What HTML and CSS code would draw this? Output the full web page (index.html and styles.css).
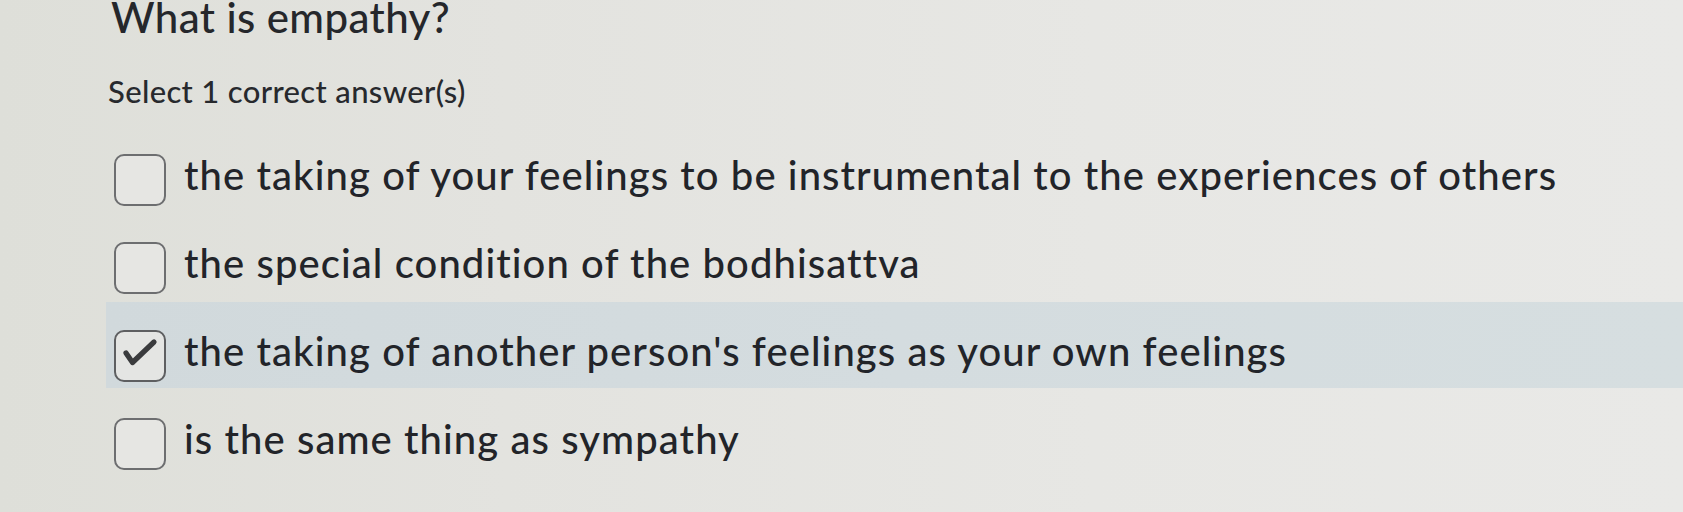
FILE: index.html
```html
<!DOCTYPE html>
<html lang="en">
<head>
<meta charset="utf-8">
<title>What is empathy?</title>
<link rel="stylesheet" href="styles.css">
</head>
<body>
<main class="page">
  <h1 class="question">What is empathy?</h1>
  <p class="hint">Select 1 correct answer(s)</p>
  <ul class="options">
    <li class="option">
      <span class="box"></span>
      <span class="label">the taking of your feelings to be instrumental to the experiences of others</span>
    </li>
    <li class="option">
      <span class="box"></span>
      <span class="label">the special condition of the bodhisattva</span>
    </li>
    <li class="option selected">
      <span class="box checked">
        <svg class="tick" viewBox="0 0 52 52" width="52" height="52" aria-hidden="true">
          <path d="M12 23 L18.5 32.5 L40 12" fill="none" stroke="#3a3b3d" stroke-width="5.2" stroke-linecap="round" stroke-linejoin="round"/>
        </svg>
      </span>
      <span class="label">the taking of another person's feelings as your own feelings</span>
    </li>
    <li class="option">
      <span class="box"></span>
      <span class="label">is the same thing as sympathy</span>
    </li>
  </ul>
</main>
</body>
</html>
```
FILE: styles.css
```css
html, body {
  margin: 0;
  padding: 0;
}

body {
  width: 1683px;
  height: 512px;
  overflow: hidden;
  background: linear-gradient(90deg, #dedfd9 0%, #e3e3df 30%, #e7e7e4 65%, #e9e9e7 100%);
  font-family: Lato, "Open Sans", "Liberation Sans", sans-serif;
  font-variant-ligatures: none;
  color: #222429;
}

.page {
  display: flex;
  flex-direction: column;
}

.question {
  margin: 0 0 0 111px;
  font-size: 42px;
  line-height: 34px;
  font-weight: 500;
  letter-spacing: 0.4px;
  color: #25272b;
}

.hint {
  margin: 37px 0 0 108px;
  font-size: 31px;
  line-height: 40px;
  font-weight: 500;
  letter-spacing: 0.35px;
  color: #27292d;
}

.options {
  list-style: none;
  margin: 15px 0 0 106px;
  padding: 0;
  display: flex;
  flex-direction: column;
  gap: 2px;
}

.option {
  height: 86px;
  display: flex;
  align-items: flex-start;
  padding-left: 8px;
}

.option.selected {
  background: linear-gradient(90deg, #d1d9dc 0%, #d4dcdf 50%, #d6dee0 100%);
}

.box {
  box-sizing: border-box;
  flex: 0 0 auto;
  width: 52px;
  height: 52px;
  margin-top: 28px;
  border: 2.4px solid #6d6e70;
  border-radius: 10px;
  background: #e6e6e3;
  position: relative;
}

.box.checked {
  border-color: #5e5f61;
  background: #e4e5e3;
}

.tick {
  position: absolute;
  left: -2.4px;
  top: -2.4px;
}

.label {
  margin: 25px 0 0 18px;
  font-size: 40px;
  line-height: 48px;
  font-weight: 500;
  letter-spacing: 1.08px;
  white-space: nowrap;
  color: #222429;
}
```
